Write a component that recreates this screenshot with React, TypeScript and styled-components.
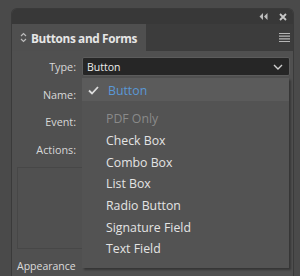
import React from 'react';
import styled, { createGlobalStyle } from 'styled-components';

const GlobalStyle = createGlobalStyle`
  html, body {
    margin: 0;
    padding: 0;
    background: #4a4a4a;
    width: 300px;
    height: 276px;
    overflow: hidden;
  }
  * { box-sizing: border-box; }
`;

const items = [
  { label: 'PDF Only', disabled: true },
  { label: 'Check Box' },
  { label: 'Combo Box' },
  { label: 'List Box' },
  { label: 'Radio Button' },
  { label: 'Signature Field' },
  { label: 'Text Field' },
];

const App = () => {
  return (
    <>
      <GlobalStyle />
      <Outer>
        <Panel>
          <TitleBar>
            <BarIcon>
              <svg width="9" height="7" viewBox="0 0 9 7">
                <path d="M4 0 L0.5 3.5 L4 7 Z M8.5 0 L5 3.5 L8.5 7 Z" fill="#bdbdbd" />
              </svg>
            </BarIcon>
            <BarIcon>
              <svg width="8" height="8" viewBox="0 0 8 8">
                <path d="M1 1 L7 7 M7 1 L1 7" stroke="#c8c8c8" strokeWidth="1.8" />
              </svg>
            </BarIcon>
          </TitleBar>
          <TabRow>
            <Tab>
              <svg width="7" height="11" viewBox="0 0 7 11">
                <path d="M1 4 L3.5 1.5 L6 4 M1 7 L3.5 9.5 L6 7" stroke="#bbbbbb" strokeWidth="1.2" fill="none" />
              </svg>
              <TabTitle>Buttons and Forms</TabTitle>
            </Tab>
            <TabFiller>
              <svg width="11" height="9" viewBox="0 0 11 9">
                <path d="M0 0.5 H11 M0 3.2 H11 M0 5.8 H11 M0 8.5 H11" stroke="#b5b5b5" strokeWidth="1.2" />
              </svg>
            </TabFiller>
          </TabRow>
          <Body>
            <Form>
              <Label>Type:</Label>
              <SelectWrap>
                <Select>
                  <span>Button</span>
                  <svg width="10" height="6" viewBox="0 0 10 6">
                    <path d="M1 1 L5 5 L9 1" stroke="#cfcfcf" strokeWidth="1.4" fill="none" />
                  </svg>
                </Select>
                <Menu>
                  <SelectedItem>
                    <svg width="11" height="9" viewBox="0 0 11 9">
                      <path d="M1 4.5 L4 7.5 L10 1" stroke="#dcdcdc" strokeWidth="1.8" fill="none" />
                    </svg>
                    <SelectedText>Button</SelectedText>
                  </SelectedItem>
                  <MenuList>
                    {items.map((it) => (
                      <MenuItem key={it.label} $disabled={it.disabled}>
                        {it.label}
                      </MenuItem>
                    ))}
                  </MenuList>
                </Menu>
              </SelectWrap>
              <Label>Name:</Label>
              <Spacer />
              <Label>Event:</Label>
              <Spacer />
              <Label>Actions:</Label>
              <Spacer />
            </Form>
            <PreviewBox />
            <Section>Appearance</Section>
          </Body>
        </Panel>
      </Outer>
    </>
  );
};

const Outer = styled.div`
  padding: 8px 6px 0 11px;
  height: 276px;
`;

const Panel = styled.div`
  background: #505050;
  border: 1px solid #3a3a3a;
  border-bottom: none;
  border-radius: 6px 6px 0 0;
  height: 268px;
  display: flex;
  flex-direction: column;
  overflow: hidden;
  font-family: 'Open Sans', 'Noto Sans', sans-serif;
`;

const TitleBar = styled.div`
  height: 15px;
  background: #383838;
  display: flex;
  justify-content: flex-end;
  align-items: center;
  gap: 11px;
  padding-right: 6px;
`;

const BarIcon = styled.div`
  display: flex;
  align-items: center;
`;

const TabRow = styled.div`
  display: flex;
  height: 27px;
  background: #3c3c3c;
`;

const Tab = styled.div`
  width: 134px;
  background: #4f4f4f;
  display: flex;
  align-items: center;
  gap: 4px;
  padding-left: 8px;
`;

const TabTitle = styled.span`
  color: #e6e6e6;
  font-weight: 700;
  font-size: 11.8px;
  letter-spacing: -0.35px;
`;

const TabFiller = styled.div`
  flex: 1;
  display: flex;
  justify-content: flex-end;
  align-items: center;
  padding-right: 3px;
`;

const Body = styled.div`
  flex: 1;
  padding: 6px 3px 0 5px;
  display: flex;
  flex-direction: column;
`;

const Form = styled.div`
  display: grid;
  grid-template-columns: 59px 208px;
  column-gap: 6px;
  grid-template-rows: repeat(4, 19px);
  row-gap: 8.5px;
  align-items: center;
`;

const Label = styled.div`
  color: #d8d8d8;
  font-size: 10.8px;
  text-align: right;
`;

const Spacer = styled.div``;

const SelectWrap = styled.div`
  position: relative;
  height: 19px;
`;

const Select = styled.div`
  height: 19px;
  background: #262626;
  border: 1px solid #5c5c5c;
  border-radius: 2px;
  display: flex;
  align-items: center;
  justify-content: space-between;
  padding: 0 6px 0 4px;
  color: #ececec;
  font-size: 10.5px;
`;

const Menu = styled.div`
  position: absolute;
  top: 21px;
  left: 0;
  width: 207px;
  background: #535353;
  box-shadow: 2px 2px 2px rgba(0, 0, 0, 0.35);
  z-index: 2;
  padding-bottom: 8px;
`;

const SelectedItem = styled.div`
  height: 23px;
  padding-top: 1px;
  background: #5b5b5b;
  display: flex;
  align-items: center;
  gap: 9px;
  padding-left: 6px;
`;

const SelectedText = styled.span`
  color: #5a98d6;
  font-size: 12.3px;
`;

const MenuList = styled.div`
  display: flex;
  flex-direction: column;
  padding: 7px 0 0 24px;
`;

const MenuItem = styled.div<{ $disabled?: boolean }>`
  height: 21.7px;
  display: flex;
  align-items: center;
  font-size: 12.3px;
  color: ${(p) => (p.$disabled ? '#8a8a8a' : '#e4e4e4')};
`;

const PreviewBox = styled.div`
  margin-top: 8.5px;
  width: 66px;
  height: 82px;
  border: 1px solid #474747;
`;

const Section = styled.div`
  margin-top: 10px;
  color: #dcdcdc;
  font-size: 10.5px;
`;

export default App;
